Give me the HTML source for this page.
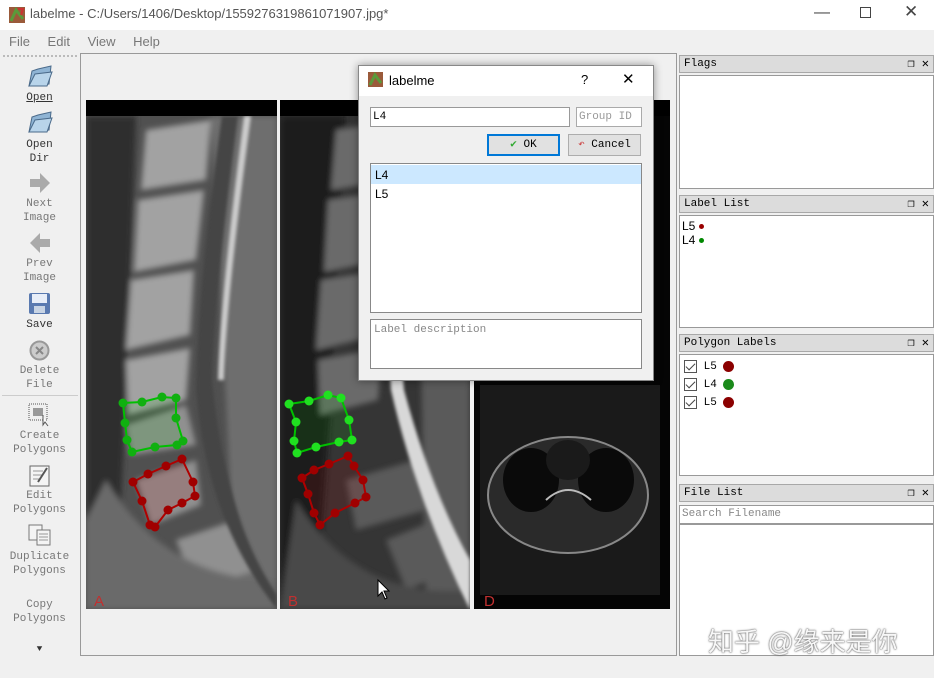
<!DOCTYPE html>
<html><head><meta charset="utf-8"><style>
*{margin:0;padding:0;box-sizing:border-box}
body{width:934px;height:678px;overflow:hidden;background:#f0f0f0;position:relative;font-family:"Liberation Sans","Noto Sans CJK SC",sans-serif;font-size:12px;color:#000}
.a{position:absolute}
.mono{font-family:"Liberation Mono","Noto Sans CJK SC",monospace;font-size:11px}
.tb{position:absolute;left:0;width:79px;text-align:center;line-height:14px;color:#333}
.dis{color:#777}
.dock{position:absolute;left:679px;width:255px;background:#dcdcdc;border:1px solid #a8a8a8;height:18px;padding-left:4px;line-height:16px}
.dock span{position:absolute;right:4px;top:0;font-size:12px}
.box{position:absolute;left:679px;width:255px;background:#fff;border:1px solid #999}
.cb{display:inline-block;width:13px;height:13px;border:1px solid #555;background:#fff;vertical-align:middle;position:relative}
.cb:after{content:"";position:absolute;left:3px;top:0px;width:4px;height:8px;border:solid #444;border-width:0 1px 1px 0;transform:rotate(45deg)}
.dot{display:inline-block;width:11px;height:11px;border-radius:50%;vertical-align:middle}
</style></head><body>
<!-- title bar -->
<div class="a" style="left:0;top:0;width:934px;height:30px;background:#fff"></div>
<svg class="a" style="left:9px;top:7px" width="16" height="16"><rect width="16" height="16" fill="#9a5a3a"/><path d="M2 14 L7 3 L14 12" stroke="#5a9a3a" stroke-width="3" fill="none"/><path d="M9 2 L14 2 L12 8" stroke="#c33" stroke-width="2" fill="none"/></svg>
<div class="a" style="left:30px;top:6px;font-size:13px;color:#555">labelme - C:/Users/1406/Desktop/1559276319861071907.jpg*</div>
<div class="a" style="left:814px;top:4px;font-size:16px;color:#444">&#8212;</div>
<div class="a" style="left:860px;top:7px;width:11px;height:11px;border:1px solid #444"></div>
<div class="a" style="left:904px;top:2px;font-size:17px;color:#444">&#x2715;</div>
<!-- menu -->
<div class="a" style="left:9px;top:34px;font-size:13px;color:#777;word-spacing:14px">File Edit View Help</div>
<!-- toolbar -->
<div class="a" style="left:3px;top:55px;width:74px;border-top:2px dotted #bbb"></div>
<svg class="a" style="left:27px;top:64px" width="26" height="26"><path d="M2 22 L5 7 L11 5 L24 2 L22 20 Z" fill="#8fb4d4" stroke="#4a6a8a"/><path d="M2 22 L8 10 L25 8 L20 22Z" fill="#b8d4ea" stroke="#4a6a8a"/></svg>
<div class="tb mono" style="top:91px;text-decoration:underline">Open</div>
<svg class="a" style="left:27px;top:110px" width="26" height="26"><path d="M2 22 L5 7 L11 5 L24 2 L22 20 Z" fill="#8fb4d4" stroke="#4a6a8a"/><path d="M2 22 L8 10 L25 8 L20 22Z" fill="#b8d4ea" stroke="#4a6a8a"/></svg>
<div class="tb mono" style="top:138px">Open<br>Dir</div>
<svg class="a" style="left:29px;top:172px" width="22" height="22"><path d="M1 7 H11 V1 L21 11 L11 21 V15 H1Z" fill="#aaa"/></svg>
<div class="tb mono dis" style="top:197px">Next<br>Image</div>
<svg class="a" style="left:29px;top:232px" width="22" height="22"><path d="M21 7 H11 V1 L1 11 L11 21 V15 H21Z" fill="#aaa"/></svg>
<div class="tb mono dis" style="top:257px">Prev<br>Image</div>
<svg class="a" style="left:28px;top:292px" width="23" height="23"><rect x="1" y="1" width="21" height="21" rx="2" fill="#5a7ab0"/><rect x="4" y="2" width="15" height="9" fill="#e8eef8"/><rect x="6" y="14" width="11" height="7" fill="#c8d4e4"/></svg>
<div class="tb mono" style="top:318px">Save</div>
<svg class="a" style="left:29px;top:340px" width="21" height="21"><circle cx="10.5" cy="10.5" r="9" fill="#ccc" stroke="#999" stroke-width="2"/><path d="M7 7 L14 14 M14 7 L7 14" stroke="#888" stroke-width="2"/></svg>
<div class="tb mono dis" style="top:364px">Delete<br>File</div>
<div class="a" style="left:2px;top:395px;width:76px;border-top:1px solid #ccc"></div>
<svg class="a" style="left:28px;top:403px" width="24" height="24"><rect x="1" y="1" width="18" height="16" fill="none" stroke="#555" stroke-dasharray="1 1"/><rect x="5" y="5" width="10" height="8" fill="#999"/><path d="M15 12 L15 22 L17 19 L20 23" stroke="#555" fill="#fff"/></svg>
<div class="tb mono dis" style="top:429px">Create<br>Polygons</div>
<svg class="a" style="left:29px;top:464px" width="22" height="24"><rect x="1" y="2" width="19" height="20" fill="#f4f4f4" stroke="#666"/><path d="M4 7h10M4 11h10M4 15h7" stroke="#999"/><path d="M9 18 L18 4" stroke="#555" stroke-width="2"/></svg>
<div class="tb mono dis" style="top:489px">Edit<br>Polygons</div>
<svg class="a" style="left:28px;top:524px" width="24" height="22"><rect x="1" y="1" width="13" height="15" fill="#f4f4f4" stroke="#777"/><rect x="9" y="6" width="13" height="15" fill="#f4f4f4" stroke="#777"/><path d="M11 10h9M11 13h9M11 16h9" stroke="#999"/></svg>
<div class="tb mono dis" style="top:550px">Duplicate<br>Polygons</div>
<div class="tb mono dis" style="top:598px">Copy<br>Polygons</div>
<div class="tb" style="top:643px;font-size:10px">&#x2BC6;</div>
<!-- canvas -->
<div class="a" style="left:80px;top:53px;width:597px;height:603px;border:1px solid #999;background:#f0f0f0"></div>
<svg class="a" style="left:86px;top:100px" width="584" height="509">
<defs>
<filter id="bl"><feGaussianBlur stdDeviation="3"/></filter>
<filter id="bl2"><feGaussianBlur stdDeviation="1.5"/></filter>
<clipPath id="ca"><rect x="0" y="16" width="191" height="493"/></clipPath>
<clipPath id="cb2"><rect x="194" y="16" width="190" height="493"/></clipPath>
</defs>
<rect width="584" height="509" fill="#000"/>
<g clip-path="url(#ca)">
<rect x="0" y="16" width="191" height="493" fill="#505050"/>
<g filter="url(#bl)">
<path d="M0 16 L50 16 L40 300 L30 509 L0 509Z" fill="#2e2e2e"/>
<path d="M125 16 L191 16 L191 509 L150 509 L140 300Z" fill="#6e6e6e"/>
<path d="M60 30 L125 20 L120 80 L55 90Z M52 100 L118 90 L110 160 L48 172Z M45 180 L108 170 L104 235 L40 250Z M40 260 L104 248 L100 300 L42 315Z" fill="#a2a2a2"/>
<path d="M40 325 L100 305 L110 345 L45 355Z M50 380 L110 360 L115 405 L65 425Z M90 440 L150 420 L170 470 L110 490Z" fill="#909090"/>
<path d="M20 380 Q80 480 191 480 L191 509 L0 509 L0 420Z" fill="#6a6a6a"/>
</g>
<path d="M136 16 L152 16 Q128 200 126 280 Q140 420 191 495 L191 509 Q120 420 110 290 Q112 180 136 16Z" fill="#444" filter="url(#bl2)"/>
<path d="M158 16 L165 16 Q140 200 138 280 L132 280 Q134 200 158 16Z" fill="#ccc" filter="url(#bl2)"/>
</g>
<g clip-path="url(#cb2)">
<rect x="194" y="16" width="190" height="493" fill="#353535"/>
<g filter="url(#bl)">
<path d="M194 16 L260 16 L245 300 L230 509 L194 509Z" fill="#1a1a1a"/>
<path d="M330 16 L384 16 L384 509 L340 509Z" fill="#5a5a5a"/>
<path d="M250 30 L315 20 L310 80 L245 90Z M242 100 L308 90 L300 160 L238 172Z M235 180 L298 170 L294 235 L230 250Z M232 260 L296 248 L292 300 L234 315Z" fill="#6a6a6a"/>
<path d="M260 380 L330 360 L340 410 L270 430Z M300 440 L350 420 L370 470 L320 490Z" fill="#5a5a5a"/>
<path d="M210 400 Q270 500 384 490 L384 509 L194 509Z" fill="#4a4a4a"/>
</g>
<path d="M316 16 L330 16 Q310 200 318 290 Q345 390 384 460 L384 510 Q330 400 305 290 Q300 200 316 16Z" fill="#d8d8d8" filter="url(#bl2)"/>
</g>
<rect x="388" y="16" width="196" height="493" fill="#050505"/>
<rect x="394" y="285" width="180" height="210" fill="#1a1a1a"/>
<ellipse cx="482" cy="395" rx="80" ry="58" fill="#2a2a2a" stroke="#888" stroke-width="2"/>
<ellipse cx="445" cy="380" rx="28" ry="32" fill="#0a0a0a"/><ellipse cx="520" cy="380" rx="28" ry="32" fill="#0a0a0a"/>
<ellipse cx="482" cy="360" rx="22" ry="20" fill="#1a1a1a"/>
<path d="M460 400 Q482 380 505 400" stroke="#bbb" stroke-width="2" fill="none"/>
<text x="8" y="506" fill="#c03030" font-size="15" font-family="Liberation Sans">A</text>
<text x="202" y="506" fill="#c03030" font-size="15" font-family="Liberation Sans">B</text>
<text x="398" y="506" fill="#c03030" font-size="15" font-family="Liberation Sans">D</text>
<rect x="191" y="0" width="3" height="509" fill="#f0f0f0"/><rect x="384" y="0" width="4" height="509" fill="#f0f0f0"/>
<g transform="translate(-86,-100)">
<g fill="#00c800" fill-opacity=".12" stroke="#00c000" stroke-width="2"><polygon points="123,403 142,402 162,397 176,398 176,418 183,441 177,445 155,447 132,452 127,440 125,423"/><polygon points="289,404 309,401 328,395 341,398 349,420 352,440 339,442 316,447 297,453 294,441 296,422"/></g>
<g fill="#c80000" fill-opacity=".12" stroke="#b00000" stroke-width="2"><polygon points="133,482 148,474 166,466 182,459 193,482 195,496 182,503 168,510 155,527 150,525 142,501"/><polygon points="302,478 314,470 329,464 348,456 354,466 363,480 366,497 355,503 335,513 320,525 314,513 308,494"/></g>
<g fill="#10b010"><circle cx="123" cy="403" r="4.5"/><circle cx="142" cy="402" r="4.5"/><circle cx="162" cy="397" r="4.5"/><circle cx="176" cy="398" r="4.5"/><circle cx="176" cy="418" r="4.5"/><circle cx="183" cy="441" r="4.5"/><circle cx="177" cy="445" r="4.5"/><circle cx="155" cy="447" r="4.5"/><circle cx="132" cy="452" r="4.5"/><circle cx="127" cy="440" r="4.5"/><circle cx="125" cy="423" r="4.5"/></g>
<g fill="#20e020"><circle cx="289" cy="404" r="4.5"/><circle cx="309" cy="401" r="4.5"/><circle cx="328" cy="395" r="4.5"/><circle cx="341" cy="398" r="4.5"/><circle cx="349" cy="420" r="4.5"/><circle cx="352" cy="440" r="4.5"/><circle cx="339" cy="442" r="4.5"/><circle cx="316" cy="447" r="4.5"/><circle cx="297" cy="453" r="4.5"/><circle cx="294" cy="441" r="4.5"/><circle cx="296" cy="422" r="4.5"/></g>
<g fill="#a00000"><circle cx="133" cy="482" r="4.5"/><circle cx="148" cy="474" r="4.5"/><circle cx="166" cy="466" r="4.5"/><circle cx="182" cy="459" r="4.5"/><circle cx="193" cy="482" r="4.5"/><circle cx="195" cy="496" r="4.5"/><circle cx="182" cy="503" r="4.5"/><circle cx="168" cy="510" r="4.5"/><circle cx="155" cy="527" r="4.5"/><circle cx="150" cy="525" r="4.5"/><circle cx="142" cy="501" r="4.5"/>
<circle cx="302" cy="478" r="4.5"/><circle cx="314" cy="470" r="4.5"/><circle cx="329" cy="464" r="4.5"/><circle cx="348" cy="456" r="4.5"/><circle cx="354" cy="466" r="4.5"/><circle cx="363" cy="480" r="4.5"/><circle cx="366" cy="497" r="4.5"/><circle cx="355" cy="503" r="4.5"/><circle cx="335" cy="513" r="4.5"/><circle cx="320" cy="525" r="4.5"/><circle cx="314" cy="513" r="4.5"/><circle cx="308" cy="494" r="4.5"/></g>
<path d="M378 580 L378 596 L382 592 L385 599 L387 598 L384 591 L389 591Z" fill="#fff" stroke="#000"/>
</g>
</svg>
<!-- dialog -->
<div class="a" style="left:358px;top:65px;width:296px;height:316px;background:#f0f0f0;border:1px solid #888;box-shadow:0 0 8px rgba(0,0,0,.4)"></div>
<div class="a" style="left:359px;top:66px;width:294px;height:30px;background:#fff"></div>
<svg class="a" style="left:368px;top:72px" width="15" height="15"><rect width="15" height="15" fill="#9a5a3a"/><path d="M2 13 L7 3 L13 11" stroke="#5a9a3a" stroke-width="3" fill="none"/></svg>
<div class="a" style="left:389px;top:73px;font-size:13px">labelme</div>
<div class="a" style="left:581px;top:72px;font-size:13px">?</div>
<div class="a" style="left:622px;top:70px;font-size:15px">&#x2715;</div>
<div class="a mono" style="left:370px;top:107px;width:200px;height:20px;background:#fff;border:1px solid #999;padding:3px 2px">L4</div>
<div class="a mono" style="left:576px;top:107px;width:66px;height:20px;background:#fff;border:1px solid #aaa;padding:3px 2px;color:#999">Group ID</div>
<div class="a mono" style="left:487px;top:134px;width:73px;height:22px;background:#e1e1e1;border:2px solid #0078d7;text-align:center;line-height:18px"><span style="color:#3a3">&#x2714;</span> OK</div>
<div class="a mono" style="left:568px;top:134px;width:73px;height:22px;background:#e1e1e1;border:1px solid #adadad;text-align:center;line-height:20px"><span style="color:#c44">&#x21B6;</span> Cancel</div>
<div class="a" style="left:370px;top:163px;width:272px;height:150px;background:#fff;border:1px solid #888"></div>
<div class="a" style="left:371px;top:165px;width:270px;height:19px;background:#cce8ff;padding:3px 4px">L4</div>
<div class="a" style="left:375px;top:187px">L5</div>
<div class="a mono" style="left:370px;top:319px;width:272px;height:50px;background:#fff;border:1px solid #888;padding:4px 3px;color:#888">Label description</div>
<!-- docks -->
<div class="dock mono" style="top:55px">Flags<span>&#x2750; &#x2715;</span></div>
<div class="box" style="top:75px;height:114px"></div>
<div class="dock mono" style="top:195px">Label List<span>&#x2750; &#x2715;</span></div>
<div class="box" style="top:215px;height:113px;padding:3px 2px;line-height:14px">L5 <span class="dot" style="width:5px;height:5px;background:#900"></span><br>L4 <span class="dot" style="width:5px;height:5px;background:#080"></span></div>
<div class="dock mono" style="top:334px">Polygon Labels<span>&#x2750; &#x2715;</span></div>
<div class="box mono" style="top:354px;height:122px;padding:3px 4px;line-height:18px">
<div><span class="cb"></span> L5 <span class="dot" style="background:#8b0000"></span></div>
<div><span class="cb"></span> L4 <span class="dot" style="background:#1a8a1a"></span></div>
<div><span class="cb"></span> L5 <span class="dot" style="background:#8b0000"></span></div></div>
<div class="dock mono" style="top:484px">File List<span>&#x2750; &#x2715;</span></div>
<div class="box mono" style="top:505px;height:19px;padding:2px;color:#888">Search Filename</div>
<div class="box" style="top:524px;height:132px"></div>
<div class="a" style="left:708px;top:622px;font-size:26px;color:rgba(255,255,255,.95);text-shadow:0 0 2px #666,0 0 1px #444;white-space:nowrap">知乎 @缘来是你</div>
</body></html>
